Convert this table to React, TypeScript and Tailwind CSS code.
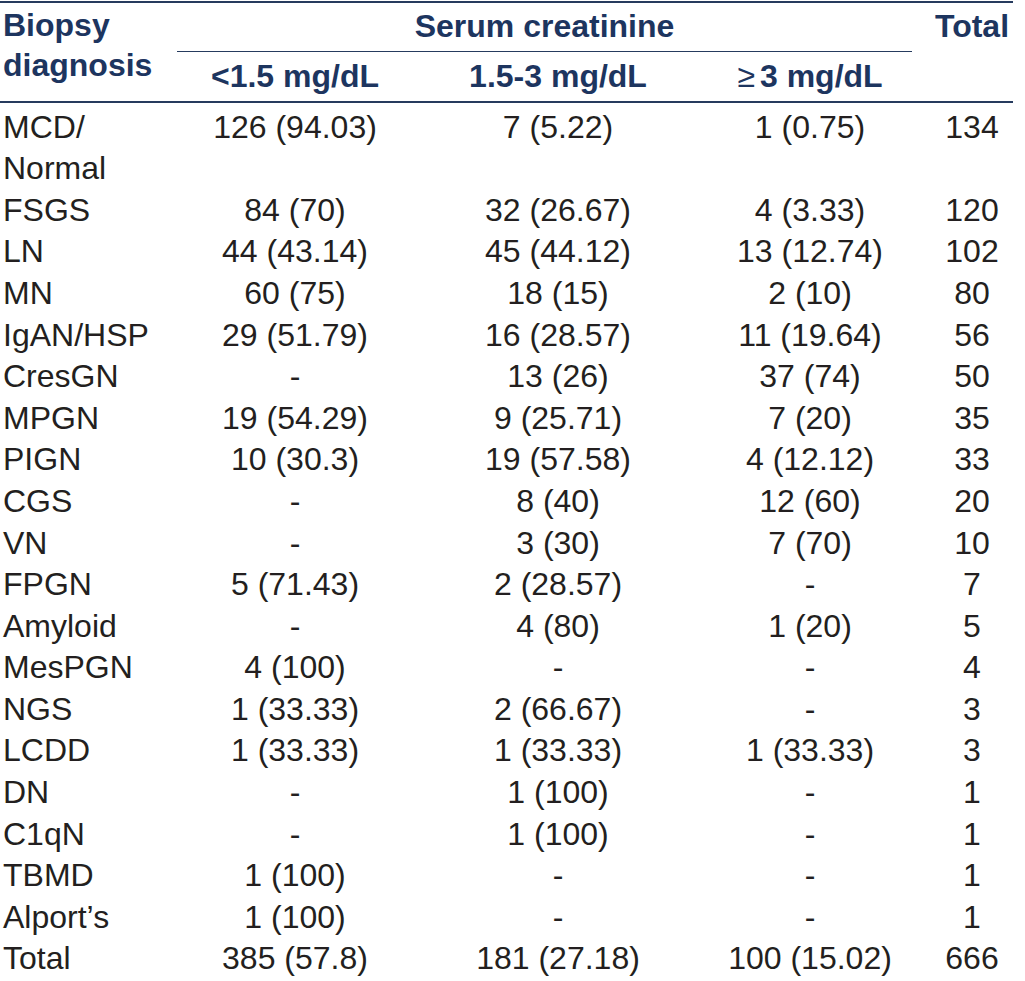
import React from "react";

const rows: [React.ReactNode, string, string, string, string][] = [
  [<>MCD/<br />Normal</>, "126 (94.03)", "7 (5.22)", "1 (0.75)", "134"],
  ["FSGS", "84 (70)", "32 (26.67)", "4 (3.33)", "120"],
  ["LN", "44 (43.14)", "45 (44.12)", "13 (12.74)", "102"],
  ["MN", "60 (75)", "18 (15)", "2 (10)", "80"],
  ["IgAN/HSP", "29 (51.79)", "16 (28.57)", "11 (19.64)", "56"],
  ["CresGN", "-", "13 (26)", "37 (74)", "50"],
  ["MPGN", "19 (54.29)", "9 (25.71)", "7 (20)", "35"],
  ["PIGN", "10 (30.3)", "19 (57.58)", "4 (12.12)", "33"],
  ["CGS", "-", "8 (40)", "12 (60)", "20"],
  ["VN", "-", "3 (30)", "7 (70)", "10"],
  ["FPGN", "5 (71.43)", "2 (28.57)", "-", "7"],
  ["Amyloid", "-", "4 (80)", "1 (20)", "5"],
  ["MesPGN", "4 (100)", "-", "-", "4"],
  ["NGS", "1 (33.33)", "2 (66.67)", "-", "3"],
  ["LCDD", "1 (33.33)", "1 (33.33)", "1 (33.33)", "3"],
  ["DN", "-", "1 (100)", "-", "1"],
  ["C1qN", "-", "1 (100)", "-", "1"],
  ["TBMD", "1 (100)", "-", "-", "1"],
  ["Alport\u2019s", "1 (100)", "-", "-", "1"],
  ["Total", "385 (57.8)", "181 (27.18)", "100 (15.02)", "666"],
];

export default function App() {
  return (
    <div className="w-[1025px] h-[981px] bg-white overflow-hidden font-['Liberation_Sans','Helvetica',Arial,sans-serif] text-[32px]">
      <div className="w-[1013px] mt-[1px]">
        <div className="grid grid-cols-[177px_236px_290px_209px_101px] border-t-2 border-b-2 border-[#263b5e] font-bold text-[#1d355f] leading-[38px]">
          <div className="row-span-2 pt-[2.4px] pl-[3px] leading-[40px]">
            Biopsy
            <br />
            diagnosis
          </div>
          <div className="col-span-3 pt-[3.5px] pb-[6.5px] border-b border-[#263b5e] text-center">
            Serum creatinine
          </div>
          <div className="row-span-2 pt-[3.5px] pl-[19px] text-center">Total</div>
          <div className="pt-[5.4px] pb-[5.6px] text-center">&lt;1.5 mg/dL</div>
          <div className="pt-[5.4px] pb-[5.6px] text-center">1.5-3 mg/dL</div>
          <div className="pt-[5.4px] pb-[5.6px] pl-[5px] text-center">
            <span className="font-normal mr-[5px]">≥</span>3 mg/dL
          </div>
        </div>
        <div className="grid grid-cols-[177px_236px_290px_209px_101px] pt-[3.6px] leading-[41.6px] text-[#231f20]">
          {rows.map((r, i) => (
            <React.Fragment key={i}>
              <div className="pl-[3px]">{r[0]}</div>
              <div className="text-center">{r[1]}</div>
              <div className="text-center">{r[2]}</div>
              <div className="pl-[5px] text-center">{r[3]}</div>
              <div className="pl-[19px] text-center">{r[4]}</div>
            </React.Fragment>
          ))}
        </div>
      </div>
    </div>
  );
}
